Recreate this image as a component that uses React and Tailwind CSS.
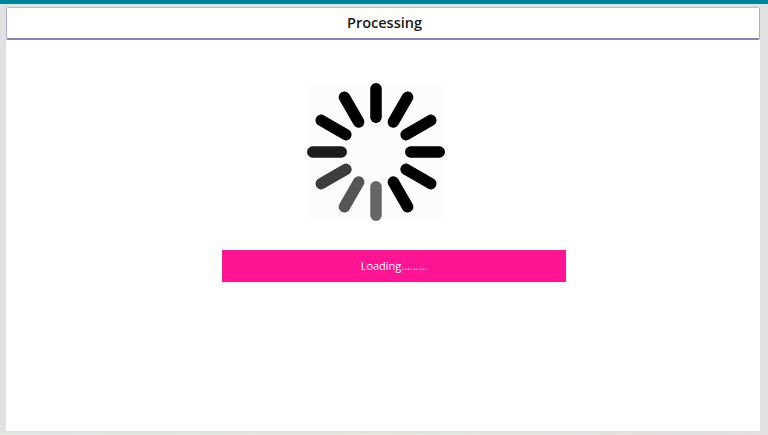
import React from 'react';

const spokes = [
  { angle: 0, color: '#000000' },
  { angle: 30, color: '#000000' },
  { angle: 60, color: '#000000' },
  { angle: 90, color: '#000000' },
  { angle: 120, color: '#000000' },
  { angle: 150, color: '#000000' },
  { angle: 180, color: '#666666' },
  { angle: 210, color: '#555555' },
  { angle: 240, color: '#3d3d3d' },
  { angle: 270, color: '#1c1c1c' },
  { angle: 300, color: '#000000' },
  { angle: 330, color: '#000000' },
];

const Spinner = () => (
  <svg width="140" height="140" viewBox="0 0 140 140" className="block">
    {spokes.map(s => (
      <line
        key={s.angle}
        x1="70"
        y1="6.75"
        x2="70"
        y2="35.25"
        stroke={s.color}
        strokeWidth="11.5"
        strokeLinecap="round"
        transform={`rotate(${s.angle} 70 70)`}
      />
    ))}
  </svg>
);

const App = () => {
  return (
    <div className="w-[768px] h-[435px] overflow-hidden flex flex-col bg-[#e1e1e1] font-['Open_Sans',sans-serif]">
      <div className="h-[4px] bg-[#038299] shrink-0"></div>
      <div className="flex-1 ml-[6px] mr-[8px] mt-[3px] mb-[2px] bg-white flex flex-col min-h-0">
        <div className="h-[33px] shrink-0 flex items-center justify-center rounded-[2px] border border-[#b9bcdc] border-b-2 border-b-[#8084b8] border-l-[#a9acd2] border-r-[#a9acd2]">
          <span className="text-[14.5px] font-semibold text-[#1b1b1b] ml-[3px]">Processing</span>
        </div>
        <div className="flex flex-col items-center ml-[-14px] mt-[45px]">
          <div className="w-[134px] h-[134px] bg-[#fcfcfc] flex items-center justify-center ml-[-1px]">
            <div className="shrink-0">
              <Spinner />
            </div>
          </div>
        </div>
        <div className="ml-[216px] mt-[31px] w-[344px] h-[32px] bg-[#ff1493] flex items-center justify-center">
          <span className="text-[11px] text-white">Loading.........</span>
        </div>
      </div>
      <div className="h-[2px] shrink-0 bg-gradient-to-r from-[#e4e8e0] via-[#e2ecd8] to-[#eadfe6]"></div>
    </div>
  );
};

export default App;
